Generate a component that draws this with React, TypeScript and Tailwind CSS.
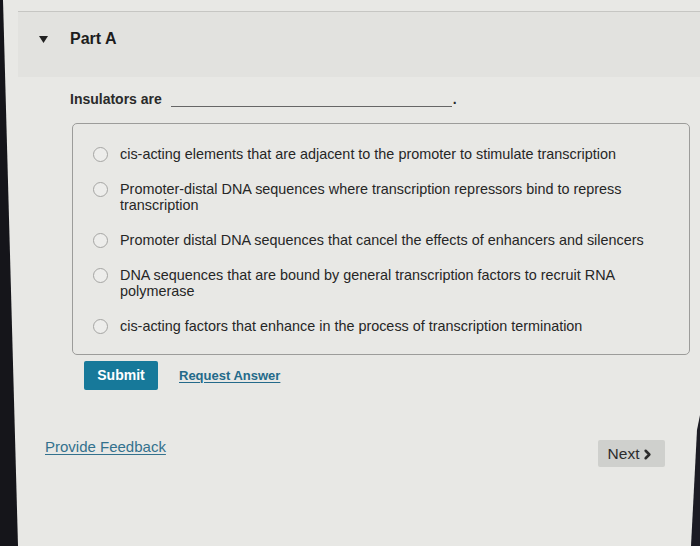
import { ChevronRight } from "lucide-react";

const options = [
  "cis-acting elements that are adjacent to the promoter to stimulate transcription",
  "Promoter-distal DNA sequences where transcription repressors bind to repress transcription",
  "Promoter distal DNA sequences that cancel the effects of enhancers and silencers",
  "DNA sequences that are bound by general transcription factors to recruit RNA polymerase",
  "cis-acting factors that enhance in the process of transcription termination",
];

export default function App() {
  return (
    <div
      className="relative h-[546px] w-[700px] overflow-hidden bg-[#e8e8e5] text-[#222]"
      style={{ fontFamily: '"Liberation Sans", Arial, sans-serif' }}
    >
      <div className="pt-[11px]">
        {/* part header */}
        <div className="ml-[18px] flex h-[66px] items-start border-t border-[#c6c6c3] bg-[#e2e2df] pl-[21px] pt-[19px]">
          <svg width="9" height="7" viewBox="0 0 9 7" className="mt-[5px]">
            <polygon points="0,0 9,0 4.5,7" fill="#222" />
          </svg>
          <span className="ml-[22px] text-[16px] leading-[16px] font-bold text-[#1d1d1d]">Part A</span>
        </div>

        {/* question */}
        <div className="ml-[70px] mt-[12px] text-[14px] font-bold text-[#2a2a2a]">
          Insulators are
          <span className="ml-[9px] inline-block w-[281px] translate-y-[3px] border-b border-[#666]" />
          <span className="ml-[1px]">.</span>
        </div>

        {/* answer box */}
        <div className="ml-[72px] mt-[13px] w-[618px] rounded-[5px] border border-[#9c9c9a] pb-[20px] pl-[20px] pr-[36px] pt-[22px]">
          <ul className="flex flex-col gap-[19px]">
            {options.map((o) => (
              <li key={o} className="flex items-start">
                <span className="mt-[1px] h-[15px] w-[15px] shrink-0 rounded-full border border-[#a5a5a3] bg-[#ededeb]" />
                <span className="ml-[12px] text-[14.4px] leading-[16px] text-[#262626]">{o}</span>
              </li>
            ))}
          </ul>
        </div>

        {/* actions */}
        <div className="ml-[84px] mt-[6px] flex items-center">
          <button className="h-[29px] w-[74px] rounded-[2px] bg-[#17799a] text-[14px] font-bold text-white">
            Submit
          </button>
          <a className="ml-[21px] text-[13px] font-bold text-[#246a8a] underline underline-offset-2">
            Request Answer
          </a>
        </div>

        {/* footer */}
        <div className="mt-[46px] flex items-start justify-between pl-[45px] pr-[35px]">
          <a className="text-[15px] text-[#33718d] underline underline-offset-2">Provide Feedback</a>
          <button className="mt-[4px] flex h-[27px] w-[67px] items-center justify-center rounded-[2px] bg-[#cfd0cd] text-[15.5px] text-[#2c2c2c]">
            Next
            <ChevronRight size={15} strokeWidth={4} className="ml-[1px] mt-[1px]" />
          </button>
        </div>
      </div>

      {/* photo edges */}
      <div
        className="pointer-events-none absolute inset-0 bg-[#15151a]"
        style={{ clipPath: "polygon(0 0, 3px 0, 18px 546px, 0 546px)" }}
      />
      <div
        className="pointer-events-none absolute inset-0 bg-[#1c1c24]"
        style={{ clipPath: "polygon(700px 415px, 697px 430px, 691px 546px, 700px 546px)" }}
      />
    </div>
  );
}
